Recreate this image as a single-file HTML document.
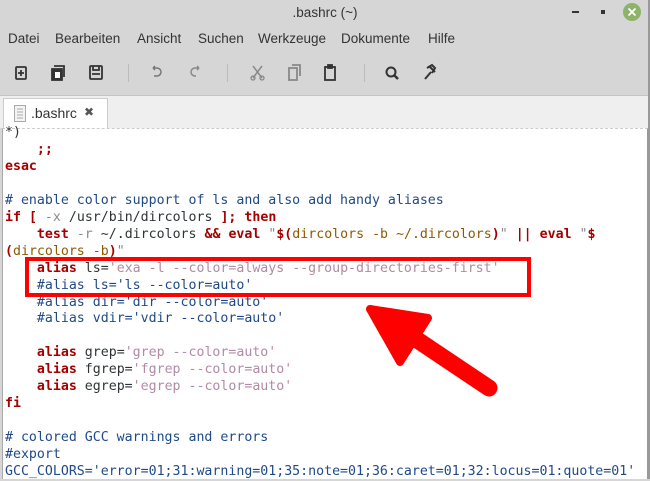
<!DOCTYPE html>
<html><head><meta charset="utf-8"><style>
*{margin:0;padding:0;box-sizing:border-box}
body{width:650px;height:479px;overflow:hidden;background:#d6d6d6;font-family:"Liberation Sans","DejaVu Sans",sans-serif;position:relative}
.title{position:absolute;top:5px;left:0;width:650px;text-align:center;font-size:13.5px;color:#333}
.menu span{position:absolute;top:31px;font-size:13.5px;color:#333;white-space:nowrap}
.tb{position:absolute;top:0;left:0}
.sep{position:absolute;top:64px;width:1px;height:18px;background:#bbb}
.tabbar{position:absolute;top:95px;left:0;width:648px;height:33px;background:#efefef;border-top:1px solid #c4c4c4}
.tab{position:absolute;top:98px;left:3px;width:105px;height:31px;background:#fff;border:1px solid #ccc;border-bottom:none;font-size:14px;color:#333}
.ed{position:absolute;top:128px;left:2px;width:646px;height:351px;background:#fff;border-top:1px dashed #ccc;border-left:1px solid #aaa;border-right:1px solid #999}
pre{position:absolute;top:-4px;left:2px;font-family:"DejaVu Sans Mono","Liberation Mono",monospace;font-size:13.25px;line-height:16.95px;color:#2e3436}
.k{color:#a40000;font-weight:bold}.c{color:#204a87}.s{color:#b08aa6}.g{color:#8a8a8a}.b{color:#8f5902}
</style></head><body>
<div style="position:absolute;right:0;top:0;width:2px;height:479px;background:#999"></div>
<div class="title">.bashrc (~)</div>
<div style="position:absolute;left:572px;top:11px;width:7px;height:2px;background:#333"></div>
<div style="position:absolute;left:601px;top:10px;width:4px;height:4px;background:#333"></div>
<svg style="position:absolute;left:621px;top:1px" width="22" height="22"><circle cx="11" cy="11" r="9" fill="#8db26a"/><path d="M7.5 7.5l7 7M14.5 7.5l-7 7" stroke="#fff" stroke-width="1.8"/></svg>
<div class="menu"><span style="left:8px">Datei</span><span style="left:55px">Bearbeiten</span><span style="left:137px">Ansicht</span><span style="left:198px">Suchen</span><span style="left:258px">Werkzeuge</span><span style="left:341px">Dokumente</span><span style="left:428px">Hilfe</span></div>
<svg class="tb" width="650" height="95" fill="none" stroke="#333" stroke-width="1.8">
<rect x="16" y="67" width="10" height="12" rx="1"/><path d="M21 70v6M18 73h6"/>
<rect x="52" y="69" width="10" height="11" fill="#333"/><path d="M54 66h10v11"/><rect x="55" y="72" width="5" height="6" fill="#fff" stroke="none"/>
<rect x="90" y="66" width="12" height="13" rx="1"/><path d="M93 66v4h6v-4M92 74h8"/>
<path d="M153 68h4a4 4 0 0 1 0 8h-3M153 68l2-2M153 68l2 2" stroke="#777" stroke-width="1.5"/>
<path d="M199 68h-4a4 4 0 0 0 0 8h1M199 68l-2-2M199 68l-2 2" stroke="#888" stroke-width="1.5"/>
<path d="M253 66l9 12M262 66l-9 12" stroke="#888" stroke-width="1.5"/><circle cx="253" cy="78" r="2" stroke="#888" stroke-width="1.3"/><circle cx="262" cy="78" r="2" stroke="#888" stroke-width="1.3"/>
<rect x="289" y="68" width="8" height="12" stroke="#888"/><path d="M292 65h8v11" stroke="#888"/>
<rect x="325" y="67" width="10" height="13"/><rect x="328" y="65" width="4" height="3" fill="#333"/>
<circle cx="391" cy="72" r="4.5" stroke-width="2"/><path d="M394 75l4 4" stroke-width="2.5"/>
<path d="M425 79l6-7M429 66l6 6M427 68l5-3l3 3l-3 5" stroke-width="2"/>
</svg>
<div class="sep" style="left:128px"></div><div class="sep" style="left:227px"></div><div class="sep" style="left:364px"></div>
<div class="tabbar"></div>
<div class="tab"><svg style="position:absolute;left:10px;top:6px" width="12" height="17"><rect x="0.5" y="0.5" width="11" height="16" fill="#f4f4f4" stroke="#aaa"/><path d="M3 4h6M3 7h6M3 10h6M3 13h6" stroke="#aaa"/></svg><span style="position:absolute;left:27px;top:6px">.bashrc</span><span style="position:absolute;left:80px;top:6px;color:#555;font-size:12px">✖</span></div>
<div class="ed"><pre>*)
    <span class="k">;;</span>
<span class="k">esac</span>

<span class="c"># enable color support of ls and also add handy aliases</span>
<span class="k">if</span> <span class="k">[</span> <span class="g">-x</span> /usr/bin/dircolors <span class="k">];</span> <span class="k">then</span>
    <span class="k">test</span> <span class="g">-r</span> ~/.dircolors <span class="k">&amp;&amp;</span> <span class="k">eval</span> <span class="g">"</span><span class="k">$(</span><span class="b">dircolors -b ~/.dircolors</span><span class="k">)</span><span class="g">"</span> <span class="k">||</span> <span class="k">eval</span> <span class="g">"</span><span class="k">$</span>
<span class="k">(</span><span class="b">dircolors -b</span><span class="k">)</span><span class="g">"</span>
    <span class="k">alias</span> ls=<span class="s">'exa -l --color=always --group-directories-first'</span>
    <span class="c">#alias ls='ls --color=auto'</span>
    <span class="c">#alias dir='dir --color=auto'</span>
    <span class="c">#alias vdir='vdir --color=auto'</span>

    <span class="k">alias</span> grep=<span class="s">'grep --color=auto'</span>
    <span class="k">alias</span> fgrep=<span class="s">'fgrep --color=auto'</span>
    <span class="k">alias</span> egrep=<span class="s">'egrep --color=auto'</span>
<span class="k">fi</span>

<span class="c"># colored GCC warnings and errors</span>
<span class="c">#export</span>
<span class="c">GCC_COLORS='error=01;31:warning=01;35:note=01;36:caret=01;32:locus=01:quote=01'</span></pre></div>
<div style="position:absolute;left:25px;top:257px;width:506px;height:40px;border:4px solid #f00"></div>
<svg style="position:absolute;left:0;top:0" width="650" height="479">
<path d="M489 388L398 327" stroke="#f00" stroke-width="17" stroke-linecap="round"/>
<path d="M370 309L428 318L400 362Z" fill="#f00" stroke="#f00" stroke-width="8" stroke-linejoin="round"/>
</svg>
</body></html>
